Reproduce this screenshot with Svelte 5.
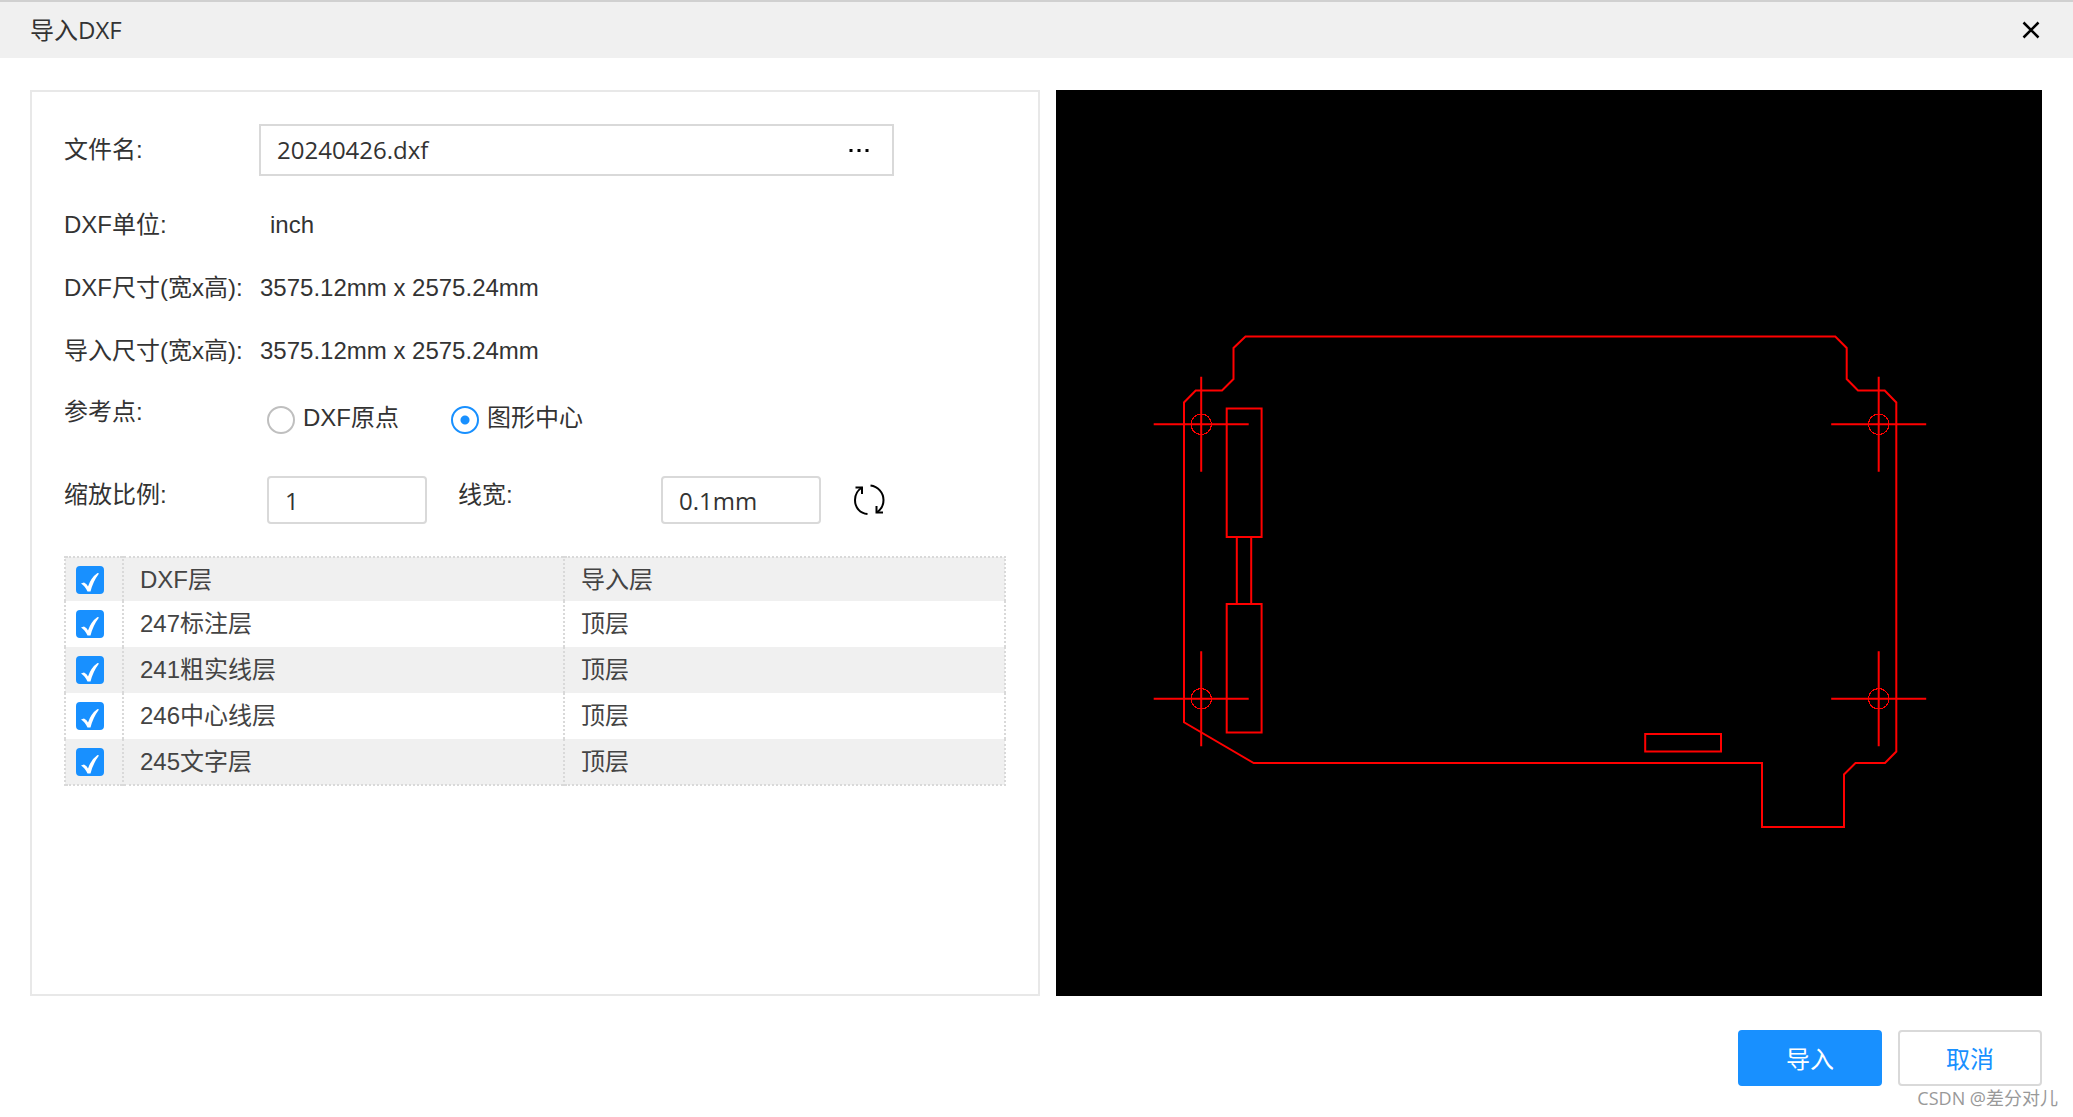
<script>
  let fileName = '20240426.dxf';
  let reference = 'center';
  let scale = '1';
  let lineWidth = '0.1mm';

  let layers = [
    { name: '247标注层', target: '顶层', checked: true },
    { name: '241粗实线层', target: '顶层', checked: true },
    { name: '246中心线层', target: '顶层', checked: true },
    { name: '245文字层', target: '顶层', checked: true }
  ];

  // mounting holes, each drawn as a circle with a cross
  const holes = [
    [145.2, 334.3],
    [145.2, 608.8],
    [822.7, 334.3],
    [822.7, 608.8]
  ];

  $: allChecked = layers.every((layer) => layer.checked);

  function toggleAll() {
    const next = !allChecked;
    layers = layers.map((layer) => ({ ...layer, checked: next }));
  }

  function reset() {
    scale = '1';
    lineWidth = '0.1mm';
  }
</script>

<div class="dialog">
  <header>
    <h1>导入DXF</h1>
    <button type="button" class="close" aria-label="关闭">
      <svg width="18" height="18" viewBox="0 0 18 18">
        <path d="M1.5 1.5L16.5 16.5M16.5 1.5L1.5 16.5" />
      </svg>
    </button>
  </header>

  <main>
    <form class="settings">
      <div class="row file-row">
        <label class="name" for="file">文件名:</label>
        <div class="file">
          <input id="file" type="text" bind:value={fileName} />
          <button type="button" aria-label="选择文件">
            <svg width="20" height="4" viewBox="0 0 20 4">
              <path d="M0.5 1h3v3h-3zM8.5 1h3v3h-3zM16.5 1h3v3h-3z" />
            </svg>
          </button>
        </div>
      </div>

      <div class="row info">
        <span class="name">DXF单位:</span>
        <span class="unit">inch</span>
      </div>
      <div class="row info">
        <span class="name">DXF尺寸(宽x高):</span>
        <span>3575.12mm x 2575.24mm</span>
      </div>
      <div class="row info">
        <span class="name">导入尺寸(宽x高):</span>
        <span>3575.12mm x 2575.24mm</span>
      </div>

      <div class="row reference">
        <span class="name" id="reference">参考点:</span>
        <div class="radios" role="radiogroup" aria-labelledby="reference">
          <label>
            <input type="radio" name="reference" value="origin" bind:group={reference} />
            DXF原点
          </label>
          <label>
            <input type="radio" name="reference" value="center" bind:group={reference} />
            图形中心
          </label>
        </div>
      </div>

      <div class="row numbers">
        <label class="name wide" for="scale">缩放比例:</label>
        <input id="scale" type="text" bind:value={scale} />
        <label class="name wide second" for="line-width">线宽:</label>
        <input id="line-width" type="text" bind:value={lineWidth} />
        <button type="button" class="refresh" aria-label="刷新" on:click={reset}>
          <svg width="34" height="32" viewBox="0 0 34 32">
            <path d="M15.5 30C8 29.5 3 23.5 3 16C3 10.5 6 6 10 3.5" />
            <path d="M3.5 3.5H10V10" />
            <path d="M18.5 1.5C26 2.5 31.5 8.5 31.5 16C31.5 21.5 28.5 26 24.5 28.5" />
            <path d="M31 28.5H24.5V22" />
          </svg>
        </button>
      </div>

      <table>
        <thead>
          <tr>
            <th class="check">
              <label>
                <input type="checkbox" aria-label="全选" checked={allChecked} on:change={toggleAll} />
                <svg width="28" height="28" viewBox="0 0 28 28">
                  <path d="M5 17.5L8 16.5Q11 18 12 20.5Q15 11.5 21.5 7L23 7.5Q17 15.5 14.5 25.5H11.5Q9 20 5 17.5Z" />
                </svg>
              </label>
            </th>
            <th>DXF层</th>
            <th>导入层</th>
          </tr>
        </thead>
        <tbody>
          {#each layers as layer}
            <tr>
              <td class="check">
                <label>
                  <input type="checkbox" aria-label={layer.name} bind:checked={layer.checked} />
                  <svg width="28" height="28" viewBox="0 0 28 28">
                    <path d="M5 17.5L8 16.5Q11 18 12 20.5Q15 11.5 21.5 7L23 7.5Q17 15.5 14.5 25.5H11.5Q9 20 5 17.5Z" />
                  </svg>
                </label>
              </td>
              <td>{layer.name}</td>
              <td>{layer.target}</td>
            </tr>
          {/each}
        </tbody>
      </table>
    </form>

    <div class="preview">
      <svg viewBox="0 0 986 906" role="img" aria-label="DXF">
        <!-- board outline -->
        <path
          d="M189.5 246.5H779.3L790.7 258V289L802 300.5H828.7L840.3 312.5V661.5L829 673H799.5L788 684.5V737H706V673H197.7L128 632.3V312.5L139.7 300.5H166L177.5 289V258Z"
        />
        <!-- connectors -->
        <path d="M170.7 318.4H205.6V447H170.7ZM170.7 514H205.6V642.4H170.7Z" />
        <path d="M180.8 447V514M195.2 447V514" />
        <path d="M589.2 644H665V661.4H589.2Z" />
        {#each holes as [x, y]}
          <path d="M{x - 47.5} {y}h95M{x} {y - 47.5}v95" />
          <circle cx={x} cy={y} r="10.2" />
        {/each}
      </svg>
    </div>
  </main>

  <footer>
    <button type="button" class="primary">导入</button>
    <button type="button">取消</button>
  </footer>

  <span class="watermark">CSDN @差分对儿</span>
</div>

<style>
  :global(body) {
    background: #fff;
  }

  .dialog {
    position: relative;
    display: flex;
    flex-direction: column;
    box-sizing: border-box;
    min-height: 100vh;
    border-top: 2px solid #d0d0d0;
    font-family: "Liberation Sans", "Noto Sans CJK SC", sans-serif;
    font-size: 24px;
    line-height: 30px;
    color: #333;
  }

  input,
  button {
    box-sizing: border-box;
    margin: 0;
    font: inherit;
    color: inherit;
  }

  button {
    padding: 0;
    border: none;
    background: none;
    cursor: pointer;
  }

  svg {
    display: block;
  }

  header {
    display: flex;
    align-items: center;
    justify-content: space-between;
    height: 56px;
    padding: 0 33px 0 30px;
    background: #f0f0f0;
  }

  h1 {
    margin: 0;
    font-family: "Open Sans", "Noto Sans CJK SC", sans-serif;
    font-size: 24px;
    font-weight: normal;
  }

  .close path {
    fill: none;
    stroke: #000;
    stroke-width: 2.5;
  }

  main {
    flex: 1;
    display: grid;
    grid-template-columns: minmax(0, 1010fr) minmax(0, 986fr);
    gap: 16px;
    padding: 32px 31px 34px 30px;
  }

  .settings {
    box-sizing: border-box;
    padding: 32px;
    border: 2px solid #e8e8e8;
  }

  .row {
    display: flex;
    align-items: center;
  }

  .name {
    flex: none;
    width: 195px;
  }

  .wide {
    width: 203px;
  }

  .file-row {
    margin-bottom: 17px;
  }

  .file {
    display: flex;
    align-items: center;
    box-sizing: border-box;
    width: 635px;
    height: 52px;
    padding: 0 23px 0 16px;
    border: 2px solid #d9d9d9;
  }

  .file input {
    flex: 1;
    min-width: 0;
    padding: 0;
    border: none;
    font-family: "Open Sans", "Noto Sans CJK SC", sans-serif;
  }

  .info {
    gap: 1px;
    height: 63px;
  }

  .unit {
    padding-left: 10px;
  }

  .reference {
    align-items: flex-start;
    margin-top: 15px;
  }

  .radios {
    display: flex;
    gap: 52px;
    padding: 6px 0 0 8px;
  }

  .radios label {
    display: flex;
    align-items: flex-start;
    gap: 8px;
  }

  .radios input {
    appearance: none;
    width: 28px;
    height: 28px;
    margin-top: 3px;
    border: 2px solid #bfbfbf;
    border-radius: 50%;
  }

  .radios input:checked {
    border-color: #1890ff;
    background: radial-gradient(circle, #1890ff 4px, transparent 5px);
  }

  .numbers {
    align-items: flex-start;
    margin-top: 42px;
  }

  .numbers .name {
    box-sizing: border-box;
    padding-top: 4px;
  }

  .numbers .second {
    margin-left: 31px;
  }

  .numbers input {
    width: 160px;
    height: 48px;
    padding: 0 16px;
    border: 2px solid #d9d9d9;
    border-radius: 4px;
    font-family: "Open Sans", "Noto Sans CJK SC", sans-serif;
  }

  .refresh {
    margin: 8px 0 0 31px;
  }

  .refresh path {
    fill: none;
    stroke: #000;
    stroke-width: 2;
  }

  table {
    width: 100%;
    margin-top: 32px;
    border-collapse: collapse;
    table-layout: fixed;
    border: 2px dotted #d9d9d9;
    color: #444;
  }

  tr {
    height: 46px;
  }

  thead tr {
    height: 44px;
  }

  thead tr,
  tbody tr:nth-child(even) {
    background: #f0f0f0;
  }

  th,
  td {
    padding: 0 16px;
    border-left: 2px dotted #d9d9d9;
    font-weight: normal;
    text-align: left;
  }

  .check {
    box-sizing: border-box;
    width: 58px;
    padding: 0 0 0 10px;
  }

  .check label {
    display: grid;
    width: 28px;
  }

  .check input {
    appearance: none;
    grid-area: 1 / 1;
    width: 28px;
    height: 28px;
    border: 2px solid #d9d9d9;
    border-radius: 4px;
    background: #fff;
  }

  .check input:checked {
    border-color: #1890ff;
    background: #1890ff;
  }

  .check svg {
    grid-area: 1 / 1;
    z-index: 1;
    pointer-events: none;
  }

  .check path {
    fill: #fff;
  }

  .preview {
    background: #000;
  }

  .preview svg {
    width: 100%;
    height: 100%;
  }

  .preview path,
  .preview circle {
    fill: none;
    stroke: #f00;
    stroke-width: 2;
  }

  .preview circle {
    stroke-width: 1;
    shape-rendering: crispEdges;
  }

  footer {
    display: flex;
    justify-content: flex-end;
    gap: 16px;
    padding: 0 31px 31px 0;
  }

  footer button {
    width: 144px;
    height: 56px;
    border: 2px solid #d9d9d9;
    border-radius: 4px;
    background: #fff;
    font-family: "Noto Sans CJK SC", sans-serif;
    color: #1890ff;
  }

  footer .primary {
    border-color: #1890ff;
    background: #1890ff;
    color: #fff;
  }

  .watermark {
    position: absolute;
    right: 15px;
    bottom: 8px;
    font-family: "Open Sans", "Noto Sans CJK SC", sans-serif;
    font-size: 18px;
    line-height: 22px;
    color: #999;
    text-shadow: -1px -1px 0 #fff;
  }
</style>
